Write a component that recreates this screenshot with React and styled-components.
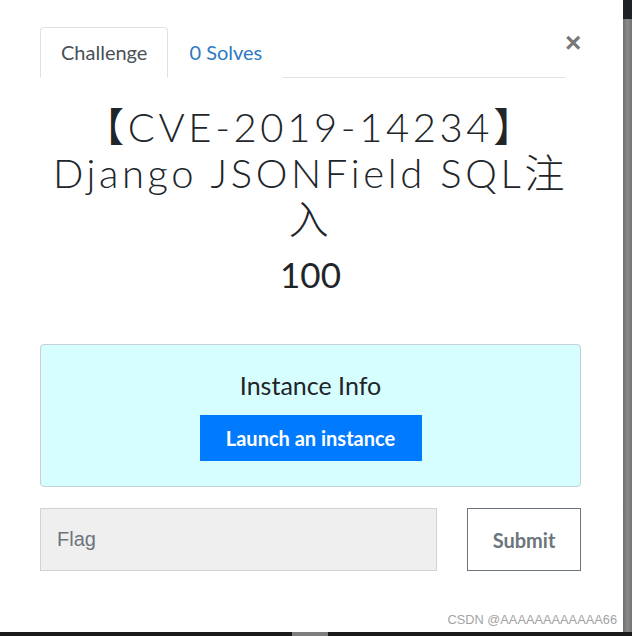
import React from 'react';
import styled, { createGlobalStyle } from 'styled-components';

const GlobalStyle = createGlobalStyle`
  html, body {
    margin: 0;
    padding: 0;
    background: #1b1f23;
    overflow: hidden;
  }
  * {
    box-sizing: border-box;
  }
`;

const Screen = styled.div`
  display: grid;
  grid-template-columns: 623px 9px;
  grid-template-rows: 632px 4px;
  width: 632px;
  height: 636px;
`;

const Modal = styled.div`
  position: relative;
  background: #fff;
  padding: 27px 42px 0 40px;
  font-family: Lato, "Noto Sans CJK SC", sans-serif;
  color: #212529;
`;

const SideBar = styled.div`
  display: flex;
  flex-direction: column;
`;

const SideTop = styled.div`
  height: 19px;
  background: #1c2226;
`;

const SideTrack = styled.div`
  flex: 1;
  background: linear-gradient(90deg, #6e6e6e 0%, #8a8a8a 50%, #737373 100%);
`;

const BottomBar = styled.div`
  grid-column: 1 / 3;
  display: flex;
  background: #1a1a1a;
`;

const BottomThumb = styled.div`
  margin-left: 292px;
  width: 36px;
  background: #7d7d7d;
`;

const Header = styled.div`
  display: flex;
  align-items: flex-start;
`;

const Tabs = styled.ul`
  flex: 1;
  display: flex;
  margin: 0;
  padding: 0;
  list-style: none;
  border-bottom: 1px solid #dee2e6;
`;

const Tab = styled.li`
  margin-bottom: -1px;
  padding: 11px 20px 12px;
  font-size: 20px;
  line-height: 26px;
  border: 1px solid ${(p) => (p.$active ? '#dee2e6' : 'transparent')};
  border-bottom-color: ${(p) => (p.$active ? '#fff' : 'transparent')};
  border-radius: 4px 4px 0 0;
  background: #fff;
  color: ${(p) => (p.$active ? '#495057' : '#2d7ac2')};
`;

const Close = styled.button`
  width: 16px;
  margin-top: 2px;
  padding: 0;
  border: none;
  background: none;
  font-family: "Liberation Sans", Arial, sans-serif;
  font-size: 28px;
  font-weight: 700;
  line-height: 28px;
  color: #777;
`;

const Title = styled.h3`
  margin: 26px 0 0;
  text-align: center;
  font-family: Lato, "Noto Sans CJK SC", sans-serif;
  font-size: 40px;
  font-weight: 300;
  line-height: 46px;
  letter-spacing: 3.6px;
  color: #212529;
`;

const Points = styled.h4`
  margin: 12px 0 0;
  text-align: center;
  font-size: 35px;
  font-weight: 400;
  line-height: 40px;
  color: #212529;
`;

const InstanceBox = styled.div`
  margin-top: 50px;
  padding: 25px 20px 25px;
  display: flex;
  flex-direction: column;
  align-items: center;
  background: #d7fefe;
  border: 1px solid #c3d0d4;
  border-radius: 4px;
`;

const InstanceTitle = styled.div`
  font-size: 25px;
  line-height: 30px;
  margin-bottom: 15px;
  color: #212529;
`;

const LaunchButton = styled.button`
  width: 222px;
  height: 46px;
  border: none;
  border-radius: 0;
  background: #007bff;
  color: #fff;
  font-family: Lato, sans-serif;
  font-size: 20px;
  font-weight: 700;
`;

const SubmitRow = styled.div`
  margin-top: 21px;
  display: grid;
  grid-template-columns: 1fr 114px;
  column-gap: 30px;
`;

const FlagInput = styled.input`
  height: 63px;
  padding: 0 16px;
  background: #efefef;
  border: 1px solid #ccd4da;
  border-radius: 0;
  font-family: "Liberation Sans", Arial, sans-serif;
  font-size: 20px;
  color: #495057;
  &::placeholder {
    color: #6c757d;
  }
`;

const SubmitButton = styled.button`
  height: 63px;
  background: #fff;
  border: 1px solid #6c757d;
  border-radius: 0;
  font-family: Lato, sans-serif;
  font-size: 20px;
  font-weight: 700;
  color: #6c757d;
`;

const Watermark = styled.div`
  position: absolute;
  right: 6px;
  bottom: 5px;
  font-family: "Liberation Sans", Arial, sans-serif;
  font-size: 12.8px;
  color: #a3a3a3;
`;

export default function App() {
  return (
    <>
      <GlobalStyle />
      <Screen>
        <Modal>
          <Header>
            <Tabs>
              <Tab $active>Challenge</Tab>
              <Tab>0 Solves</Tab>
            </Tabs>
            <Close>×</Close>
          </Header>
          <Title>
            【CVE-2019-14234】
            <br />
            Django JSONField SQL注入
          </Title>
          <Points>100</Points>
          <InstanceBox>
            <InstanceTitle>Instance Info</InstanceTitle>
            <LaunchButton>Launch an instance</LaunchButton>
          </InstanceBox>
          <SubmitRow>
            <FlagInput placeholder="Flag" />
            <SubmitButton>Submit</SubmitButton>
          </SubmitRow>
          <Watermark>CSDN @AAAAAAAAAAAA66</Watermark>
        </Modal>
        <SideBar>
          <SideTop />
          <SideTrack />
        </SideBar>
        <BottomBar>
          <BottomThumb />
        </BottomBar>
      </Screen>
    </>
  );
}
